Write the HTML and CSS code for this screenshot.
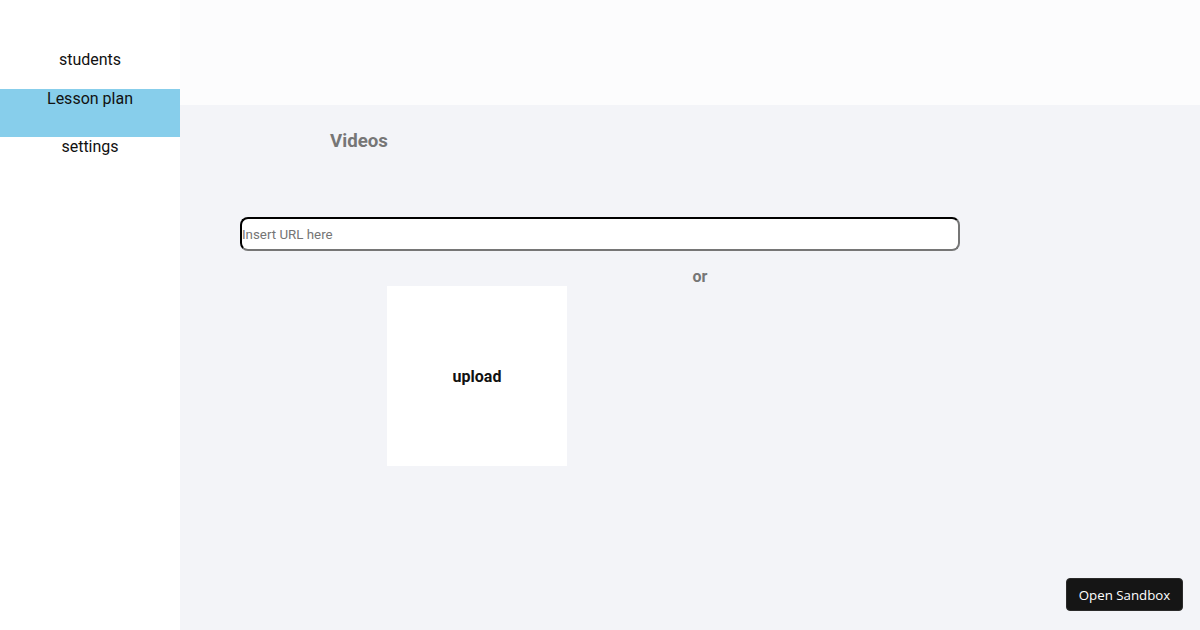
FILE: index.html
```html
<!DOCTYPE html>
<html>
<head>
<meta charset="utf-8">
<link rel="stylesheet" href="styles.css">
</head>
<body>
<div class="app">
  <nav class="sidebar">
    <div class="nav-item first">students</div>
    <div class="nav-item active">Lesson plan</div>
    <div class="nav-item">settings</div>
  </nav>
  <div class="main">
    <header class="header"></header>
    <section class="content">
      <h3 class="title">Videos</h3>
      <div class="form">
        <input class="url" type="text" placeholder="Insert URL here">
        <div class="or">or</div>
        <div class="upload-row">
          <div class="upload">upload</div>
        </div>
      </div>
    </section>
  </div>
</div>
<button class="sandbox">Open Sandbox</button>
</body>
</html>
```
FILE: styles.css
```css
html, body {
  margin: 0;
  padding: 0;
  height: 100%;
}
body {
  font-family: Roboto, "Liberation Sans", sans-serif;
  color: #111;
}
.app {
  display: flex;
  height: 630px;
}
.sidebar {
  width: 180px;
  flex: none;
  background: #fff;
  padding-top: 50px;
  box-sizing: border-box;
}
.nav-item {
  text-align: center;
  font-size: 16px;
  line-height: 19px;
  height: 48px;
  color: #111;
}
.nav-item.first {
  height: 39px;
}
.nav-item.active {
  background: #87ceeb;
}
.main {
  flex: 1;
  display: flex;
  flex-direction: column;
}
.header {
  height: 105px;
  background: #fcfcfd;
  flex: none;
}
.content {
  flex: 1;
  background: #f3f4f8;
  padding: 0 0 0 60px;
}
.title {
  margin: 0;
  padding: 25px 0 0 90px;
  font-size: 18.72px;
  line-height: 22px;
  font-weight: 700;
  color: #767676;
}
.form {
  width: 920px;
  padding-top: 65px;
  display: flex;
  flex-direction: column;
}
.url {
  width: 720px;
  height: 34px;
  box-sizing: border-box;
  margin: 0;
  padding: 1px 0;
  border: 2px inset #767676;
  border-top-color: #111;
  border-left-color: #111;
  border-radius: 8px;
  background: #fff;
  font-family: Roboto, "Liberation Sans", sans-serif;
  font-size: 13.33px;
  outline: none;
}
.url::placeholder {
  color: #757575;
}
.or {
  text-align: center;
  font-size: 16px;
  font-weight: 700;
  line-height: 19px;
  color: #767676;
  margin-top: 16px;
}
.upload-row {
  display: flex;
  padding-left: 147px;
}
.upload {
  width: 180px;
  height: 180px;
  background: #fff;
  display: flex;
  align-items: center;
  justify-content: center;
  font-size: 16px;
  font-weight: 700;
  color: #111;
}
.sandbox {
  position: fixed;
  right: 17px;
  bottom: 19px;
  width: 117px;
  height: 33px;
  background: #151515;
  color: #fff;
  border: 1px solid #2a2a2a;
  border-radius: 4px;
  font-family: "Open Sans", "Noto Sans", sans-serif;
  font-size: 13.3px;
  font-weight: 500;
  padding: 0;
}
```
